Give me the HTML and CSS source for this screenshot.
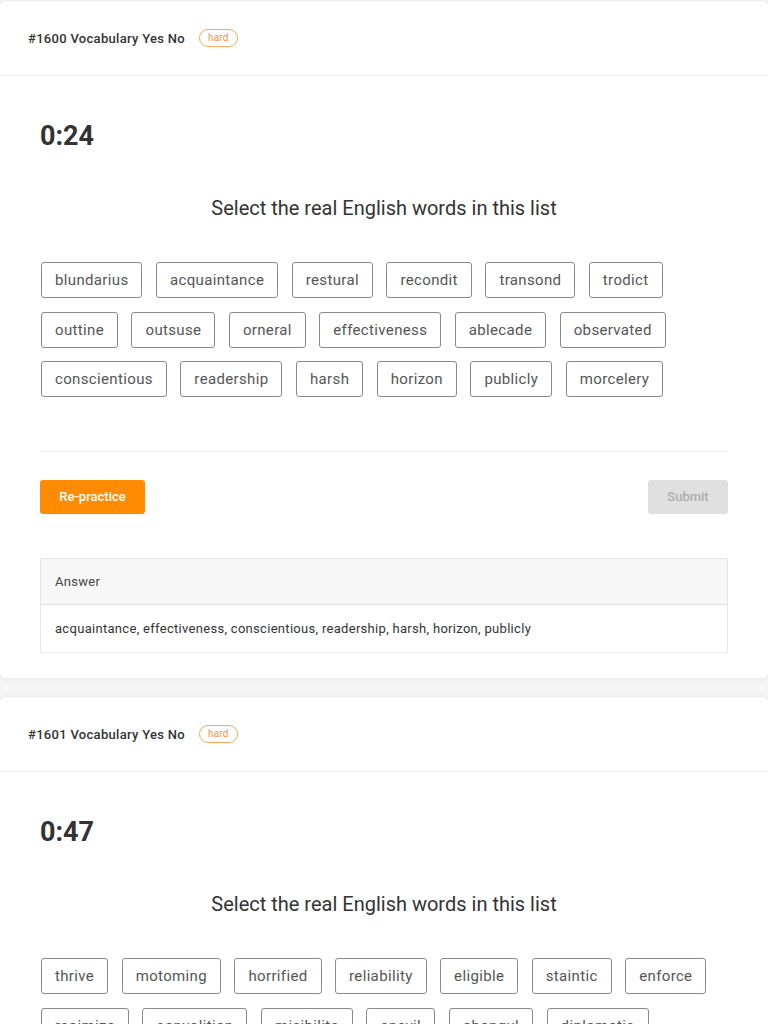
FILE: index.html
```html
<!doctype html>
<html lang="en">
<head>
    <meta charset="UTF-8">
    <title>Vocabulary Yes No</title>
    <link rel="stylesheet" href="styles.css">
</head>
<body>

    <div class='card'>
        <div class='cardHeader'>
            <span class='cardTitle'>#1600 Vocabulary Yes No</span>
            <span class='badge'>hard</span>
        </div>
        <div class='cardBody'>
            <div class='timer'>0:24</div>
            <div class='question'>Select the real English words in this list</div>
            <div class='words'>
                <div class='word'>blundarius</div>
                <div class='word'>acquaintance</div>
                <div class='word'>restural</div>
                <div class='word'>recondit</div>
                <div class='word'>transond</div>
                <div class='word'>trodict</div>
                <div class='word'>outtine</div>
                <div class='word'>outsuse</div>
                <div class='word'>orneral</div>
                <div class='word'>effectiveness</div>
                <div class='word'>ablecade</div>
                <div class='word'>observated</div>
                <div class='word'>conscientious</div>
                <div class='word'>readership</div>
                <div class='word'>harsh</div>
                <div class='word'>horizon</div>
                <div class='word'>publicly</div>
                <div class='word'>morcelery</div>
            </div>
            <div class='divider'></div>
            <div class='actions'>
                <div class='button practiceButton'>Re-practice</div>
                <div class='button submitButton'>Submit</div>
            </div>
            <div class='answerBox'>
                <div class='answerHead'>Answer</div>
                <div class='answerText'>acquaintance, effectiveness, conscientious, readership, harsh, horizon, publicly</div>
            </div>
        </div>
    </div>

    <div class='card'>
        <div class='cardHeader'>
            <span class='cardTitle'>#1601 Vocabulary Yes No</span>
            <span class='badge'>hard</span>
        </div>
        <div class='cardBody'>
            <div class='timer'>0:47</div>
            <div class='question'>Select the real English words in this list</div>
            <div class='words'>
                <div class='word'>thrive</div>
                <div class='word'>motoming</div>
                <div class='word'>horrified</div>
                <div class='word'>reliability</div>
                <div class='word'>eligible</div>
                <div class='word'>staintic</div>
                <div class='word'>enforce</div>
                <div class='word'>reoimize</div>
                <div class='word'>convolition</div>
                <div class='word'>misibilite</div>
                <div class='word'>enevil</div>
                <div class='word'>ohongul</div>
                <div class='word'>diplomatic</div>
            </div>
            <div class='divider'></div>
            <div class='actions'>
                <div class='button practiceButton'>Re-practice</div>
                <div class='button submitButton'>Submit</div>
            </div>
        </div>
    </div>

</body>
</html>
```

FILE: styles.css
```css
body
{
    margin:           0;
    background-color: #f5f5f5;
    font-family:      Roboto, "Liberation Sans", sans-serif;
    color:            #333;
}

.card
{
    background-color: #fff;
    border-top:       1px solid #ececec;
    border-radius:    6px;
    box-shadow:       0 1px 6px rgba(0, 0, 0, 0.06);
    margin-bottom:    18px;
}

.cardHeader
{
    height:           74px;
    padding:          0 28px;
    display:          flex;
    align-items:      center;
    border-bottom:    1px solid #eee;
}

.cardTitle
{
    font-size:        13px;
    font-weight:      500;
    letter-spacing:   0.3px;
    color:            #333;
}

.badge
{
    margin-left:      14px;
    height:           16px;
    line-height:      16px;
    padding:          0 8px;
    border:           1px solid #f7a95e;
    border-radius:    9px;
    font-size:        10px;
    letter-spacing:   0.2px;
    color:            #f5923e;
}

.cardBody
{
    padding:          40px 40px 25px 40px;
}

.timer
{
    font-size:        27px;
    font-weight:      700;
    line-height:      40px;
    color:            #333;
}

.question
{
    margin-top:       37px;
    font-size:        20px;
    line-height:      30px;
    text-align:       center;
    color:            #333;
}

.words
{
    margin-top:       39px;
    padding-left:     1px;
    display:          flex;
    flex-wrap:        wrap;
    column-gap:       13.5px;
    row-gap:          13.5px;
}

.word
{
    height:           34px;
    line-height:      34px;
    padding:          0 13px;
    border:           1px solid #8a8a8a;
    border-radius:    3px;
    font-size:        15px;
    letter-spacing:   0.35px;
    color:            #555;
}

.divider
{
    margin-top:       54px;
    border-top:       1px solid #eee;
}

.actions
{
    margin-top:       28px;
    display:          flex;
    justify-content:  space-between;
}

.button
{
    height:           34px;
    line-height:      34px;
    border-radius:    3px;
    font-size:        13px;
    font-weight:      500;
    text-align:       center;
}

.practiceButton
{
    width:            105px;
    background-color: #ff8c00;
    color:            #fff;
}

.submitButton
{
    width:            80px;
    background-color: #e0e0e0;
    color:            #adadad;
}

.answerBox
{
    margin-top:       44px;
    border:           1px solid #e6e6e6;
}

.answerHead
{
    height:           45px;
    line-height:      45px;
    padding:          0 14px;
    background-color: #f7f7f7;
    border-bottom:    1px solid #e0e0e0;
    font-size:        13px;
    letter-spacing:   0.3px;
    color:            #444;
}

.answerText
{
    height:           47px;
    line-height:      47px;
    padding:          0 14px;
    font-size:        13px;
    letter-spacing:   0.3px;
    color:            #333;
}
```
